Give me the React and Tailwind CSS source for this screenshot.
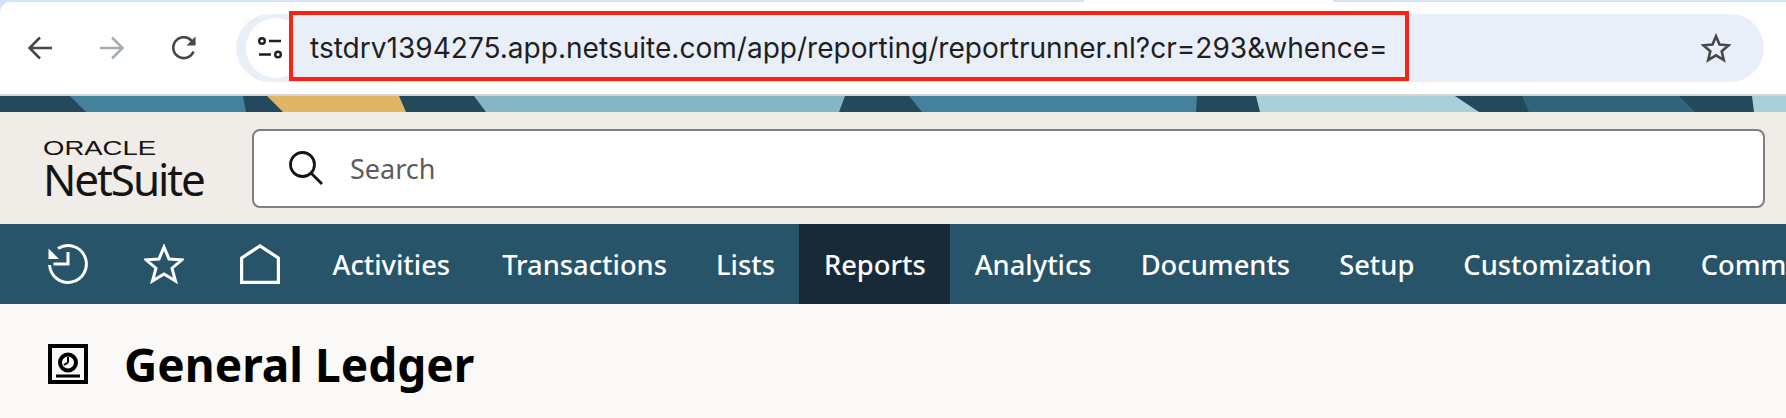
const NAV_ITEMS = ["Activities", "Transactions", "Lists", "Reports", "Analytics", "Documents", "Setup", "Customization", "Commerce"];

// banner shapes: [fill, polygon points], on a 1786x16 canvas
const BANNER = [
  ["#44829c", "70,0 243,0 246,16 86,16"],
  ["#e0b666", "267,0 399,0 406,16 283,16"],
  ["#86b6c6", "474,0 845,0 839,16 486,16"],
  ["#44829c", "909,0 1197,0 1196,16 922,16"],
  ["#a8cfda", "1256,0 1455,0 1479,16 1260,16"],
  ["#30647a", "1522,0 1679,0 1695,16 1529,16"],
  ["#a8cfda", "1752,0 1786,0 1786,16 1754,16"],
];

function BrowserBar() {
  return (
    <div className="bg-[#d3e3fd]">
      <div className="flex h-[2px]">
        <div className="w-[1084px]" />
        <div className="w-[249px] bg-white" />
      </div>
      <div className="relative flex h-[92px] items-center rounded-tl-[10px] bg-white pl-[28px] pr-[22px]">
        <svg width="24" height="24" viewBox="0 0 24 24" fill="none" stroke="#474747" strokeWidth="2.6">
          <path d="M24 12H2M12 1.5 1.5 12 12 22.5" />
        </svg>
        <svg width="24" height="24" viewBox="0 0 24 24" fill="none" stroke="#a3acb3" strokeWidth="2.6" className="ml-[48px]">
          <path d="M0 12h22M12 1.5 22.5 12 12 22.5" />
        </svg>
        <svg width="24" height="24" viewBox="0 0 24 24" fill="none" stroke="#474747" strokeWidth="2.6" className="ml-[48px]">
          <path d="M21.5 15.5A10.5 10.5 0 1 1 19.5 4.5L23 8" />
          <path d="M23.5 0.5v9h-9z" fill="#474747" stroke="none" />
        </svg>
        <div className="ml-[40px] flex h-[68px] flex-1 items-center justify-between rounded-full bg-[#e9eff8] pl-[10px] pr-[33px]">
          <div className="flex h-[60px] w-[60px] items-center rounded-full bg-white pl-[12px]">
            <svg width="24" height="22" viewBox="0 0 24 22" fill="none" stroke="#1f1f1f" strokeWidth="2.4">
              <circle cx="4" cy="4" r="2.8" />
              <path d="M11 4h12M1 17.5h12" />
              <circle cx="20" cy="17.5" r="2.8" />
            </svg>
          </div>
          <svg width="30" height="30" viewBox="0 0 30 30" fill="none" stroke="#474747" strokeWidth="2.6">
            <path d="M15 3.2 18.5 11.6 27.6 12.3 20.7 18.2 22.8 27 15 22.3 7.2 27 9.3 18.2 2.4 12.3 11.5 11.6Z" />
          </svg>
        </div>
        {/* annotation drawn over the address */}
        <div className="absolute left-[289px] top-[9px] flex h-[70px] w-[1120px] items-center border-[4px] border-[#fb2214] bg-[#e9eff8] pl-[17px] pt-[4px]">
          <span className="font-['Inter',sans-serif] text-[28.05px] leading-none text-[#1f1f1f]">
            tstdrv1394275.app.netsuite.com/app/reporting/reportrunner.nl?cr=293&whence=
          </span>
        </div>
      </div>
      <div className="h-[2px] bg-[#d6d6d6]" />
    </div>
  );
}

function Banner() {
  return (
    <svg width="1786" height="16" viewBox="0 0 1786 16" className="block bg-[#24495c]">
      {BANNER.map(([fill, points]) => (
        <polygon key={points} fill={fill} points={points} />
      ))}
    </svg>
  );
}

function SearchHeader() {
  return (
    <div className="flex h-[112px] items-center bg-[#f0ede9] pl-[43px] pr-[21px]">
      <div className="flex w-[209px] flex-col text-[#161513]">
        <span className="mt-[3px] h-[18px] origin-left scale-x-[1.41] font-['Liberation_Sans',sans-serif] text-[19.5px] leading-[18px]">ORACLE</span>
        <span className="font-['Noto_Sans',sans-serif] text-[44px] leading-[44px] tracking-[-2.1px]">NetSuite</span>
      </div>
      <div className="flex h-[79px] flex-1 items-center rounded-[8px] border-2 border-[#7f7f7f] bg-white pl-[35px]">
        <svg width="34" height="34" viewBox="0 0 34 34" fill="none" stroke="#161513" strokeWidth="2.8">
          <circle cx="13.5" cy="13.5" r="12" />
          <path d="M22 22 33 33" />
        </svg>
        <span className="ml-[27px] font-['Noto_Sans',sans-serif] text-[27px] leading-none text-[#5c5c5c]">Search</span>
      </div>
    </div>
  );
}

function NavBar() {
  return (
    <nav className="flex h-[80px] items-center overflow-hidden bg-[#275468] pl-[48px] text-white">
      <svg width="40" height="40" viewBox="0 0 40 40" fill="none" stroke="#fff" strokeWidth="3" className="shrink-0">
        <path d="M1.600 21A18.400 18.400 0 1 0 10 4.500" />
        <path d="M20 8V20H5.500" />
        <path d="M0.500 4.500V15H11z" fill="#fff" stroke="none" />
      </svg>
      <svg width="40" height="40" viewBox="0 0 40 40" fill="none" stroke="#fff" strokeWidth="3" className="ml-[56px] shrink-0">
        <path d="M20 3 25 15 38 15.8 28 24.2 31.5 37 20 30 8.500 37 12 24.200 2 15.800 15 15Z" />
      </svg>
      <svg width="40" height="40" viewBox="0 0 40 40" fill="none" stroke="#fff" strokeWidth="3.200" className="ml-[56px] shrink-0">
        <path d="M1.600 38.400V14L20 1.900 38.400 14V38.400Z" />
      </svg>
      <div className="ml-[28px] flex h-full shrink-0 font-['Noto_Sans',sans-serif] text-[27.3px] font-medium">
        {NAV_ITEMS.map((item) => (
          <div
            key={item}
            className={`flex h-full items-center pl-[24.5px] pt-[2px] ${item === "Activities" ? "pr-[27.5px]" : "pr-[24.5px]"} ${item === "Reports" ? "bg-[#182a38]" : ""}`}
          >
            {item}
          </div>
        ))}
      </div>
    </nav>
  );
}

export default function App() {
  return (
    <div className="h-[418px] w-[1786px] overflow-hidden bg-[#faf9f8]">
      <BrowserBar />
      <Banner />
      <SearchHeader />
      <NavBar />
      <div className="flex items-center pl-[48px] pt-[40px]">
        <svg width="40" height="40" viewBox="0 0 40 40" fill="none" stroke="#000" className="shrink-0">
          <rect x="2" y="2" width="36" height="36" strokeWidth="4" />
          <circle cx="20" cy="18.500" r="8" strokeWidth="4" />
          <path d="M20 18.500V13M20 18.500 16 21" strokeWidth="2" />
          <path d="M8 32H32" strokeWidth="3" />
        </svg>
        <h1 className="ml-[36px] font-['Noto_Sans',sans-serif] text-[46px] font-bold leading-[40px] text-black">General Ledger</h1>
      </div>
    </div>
  );
}
